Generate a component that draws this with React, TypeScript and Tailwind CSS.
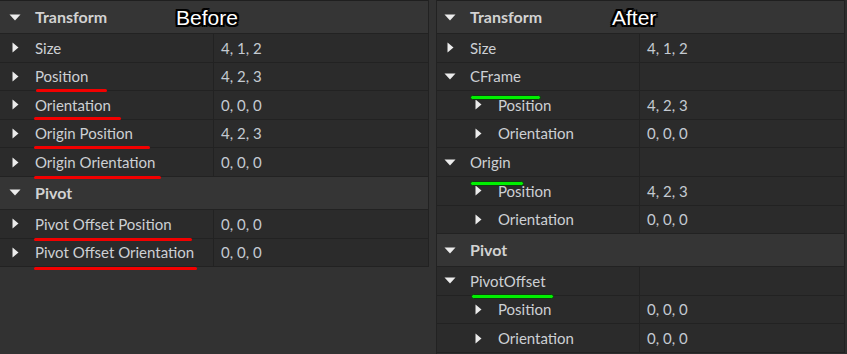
import React from 'react';

type Item =
  | { kind: 'header'; label: string }
  | { kind: 'prop'; label: string; value?: string; open?: boolean; nested?: boolean };

const before: Item[] = [
  { kind: 'header', label: 'Transform' },
  { kind: 'prop', label: 'Size', value: '4, 1, 2' },
  { kind: 'prop', label: 'Position', value: '4, 2, 3' },
  { kind: 'prop', label: 'Orientation', value: '0, 0, 0' },
  { kind: 'prop', label: 'Origin Position', value: '4, 2, 3' },
  { kind: 'prop', label: 'Origin Orientation', value: '0, 0, 0' },
  { kind: 'header', label: 'Pivot' },
  { kind: 'prop', label: 'Pivot Offset Position', value: '0, 0, 0' },
  { kind: 'prop', label: 'Pivot Offset Orientation', value: '0, 0, 0' },
];

const after: Item[] = [
  { kind: 'header', label: 'Transform' },
  { kind: 'prop', label: 'Size', value: '4, 1, 2' },
  { kind: 'prop', label: 'CFrame', open: true },
  { kind: 'prop', label: 'Position', value: '4, 2, 3', nested: true },
  { kind: 'prop', label: 'Orientation', value: '0, 0, 0', nested: true },
  { kind: 'prop', label: 'Origin', open: true },
  { kind: 'prop', label: 'Position', value: '4, 2, 3', nested: true },
  { kind: 'prop', label: 'Orientation', value: '0, 0, 0', nested: true },
  { kind: 'header', label: 'Pivot' },
  { kind: 'prop', label: 'PivotOffset', open: true },
  { kind: 'prop', label: 'Position', value: '0, 0, 0', nested: true },
  { kind: 'prop', label: 'Orientation', value: '0, 0, 0', nested: true },
];

// hand-drawn annotation strokes under the renamed labels
const redMarks = [
  'left-[36px] top-[89px] w-[71px]',
  'left-[34px] top-[117px] w-[87px]',
  'left-[34px] top-[146px] w-[116px]',
  'left-[34px] top-[176px] w-[127px]',
  'left-[34px] top-[238px] w-[158px]',
  'left-[34px] top-[267px] w-[163px]',
];

const greenMarks = [
  'left-[33px] top-[95px] w-[71px]',
  'left-[33px] top-[181px] w-[54px]',
  'left-[34px] top-[294px] w-[83px]',
];

const Arrow = ({ open }: { open?: boolean }) =>
  open ? (
    <svg width="12" height="7" viewBox="0 0 12 7" className="fill-[#ececec]">
      <path d="M0.5 0.5 H11.5 L6 6.5 Z" />
    </svg>
  ) : (
    <svg width="7" height="11" viewBox="0 0 7 11" className="fill-[#ececec]">
      <path d="M0.5 0.5 L6.5 5.5 L0.5 10.5 Z" />
    </svg>
  );

const Table = ({ items, pad, labelW }: { items: Item[]; pad: string; labelW: string }) => (
  <div className="flex flex-col border-t border-[#1f1f1f]">
    {items.map((it, i) =>
      it.kind === 'header' ? (
        <div key={i} className={`flex items-center h-[33px] bg-[#353535] border-b border-[#222] ${pad}`}>
          <span className="w-[20px] flex justify-center"><Arrow open /></span>
          <span className="ml-[10px] text-[16px] font-bold text-[#d2d2d2]">{it.label}</span>
        </div>
      ) : (
        <div key={i} className="flex h-[28.6px] bg-[#2b2b2b] border-b border-[#222]">
          <div className={`flex items-center border-r border-[#222] ${labelW} ${pad}`}>
            <span className={`w-[20px] flex justify-center ${it.nested ? 'ml-[28px]' : ''}`}>
              <Arrow open={it.open} />
            </span>
            <span className="ml-[10px] text-[#cdd0d4]">{it.label}</span>
          </div>
          <div className="flex-1 flex items-center pl-[7px] text-[#c4cad2]">{it.value}</div>
        </div>
      )
    )}
  </div>
);

const outline =
  '[text-shadow:-2px_-2px_0_#000,2px_-2px_0_#000,-2px_2px_0_#000,2px_2px_0_#000,0_2px_0_#000,2px_0_0_#000,0_-2px_0_#000,-2px_0_0_#000]';

export default function App() {
  return (
    <div className="w-[847px] h-[354px] flex bg-[#2e2e2e] overflow-hidden text-[15px] font-['Lato',sans-serif]">
      <div className="relative w-[437px] h-full bg-[#323232] border-r border-[#222]">
        <div className="w-[429px] border-r border-[#222]">
          <Table items={before} pad="pl-[5px]" labelW="w-[214px]" />
        </div>
        <span className={`absolute left-[176px] top-[2px] text-white text-[21px] font-['Liberation_Sans',sans-serif] ${outline}`}>
          Before
        </span>
        {redMarks.map((m) => (
          <div key={m} className={`absolute h-[3px] rounded-full bg-[#f20000] ${m}`} />
        ))}
      </div>
      <div className="relative flex-1 h-full">
        <div className="w-[408px] border-r border-[#222]">
          <Table items={after} pad="pl-[3px]" labelW="w-[203px]" />
        </div>
        <span className={`absolute left-[175px] top-[2px] text-white text-[21px] font-['Liberation_Sans',sans-serif] ${outline}`}>
          After
        </span>
        {greenMarks.map((m) => (
          <div key={m} className={`absolute z-10 h-[5px] rounded-full bg-[#00f000] border border-[#123a12] ${m}`} />
        ))}
      </div>
    </div>
  );
}
